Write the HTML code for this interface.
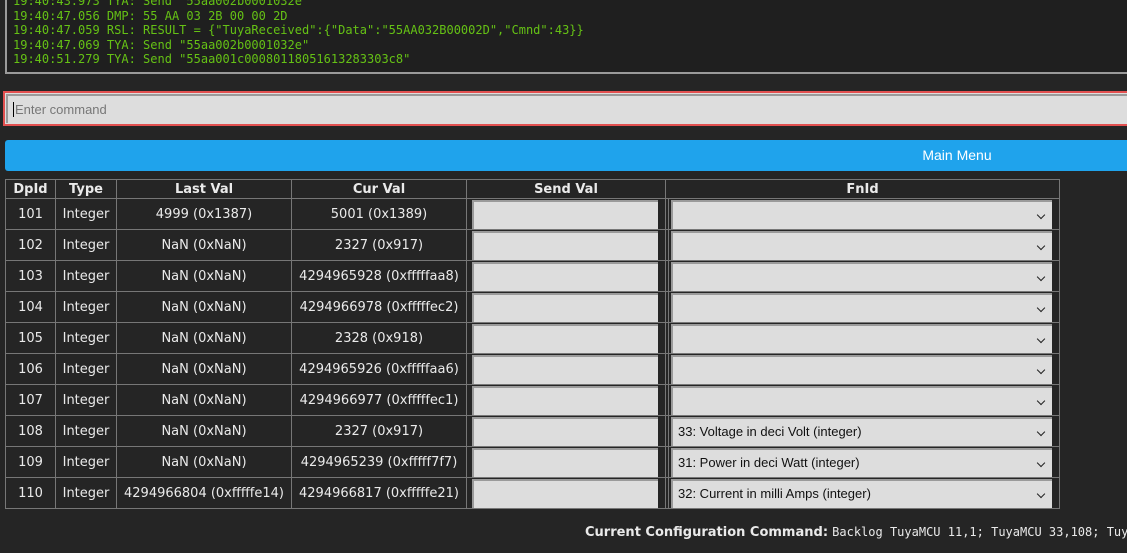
<!DOCTYPE html>
<html><head><meta charset="utf-8"><style>
*{box-sizing:border-box;margin:0;padding:0}
html,body{width:1127px;height:553px;overflow:hidden;background:#252525}
body{position:relative;font-family:"DejaVu Sans","Liberation Sans",sans-serif;color:#eaeaea}
#wrap{position:absolute;left:0;top:0;width:1127px;height:553px;overflow:hidden}
#con{position:absolute;left:5px;top:-6px;width:1130px;height:80px;background:#1f1f1f;border:2px solid #9a9a9a;border-top:none;border-right:none;font-family:"DejaVu Sans Mono",monospace;font-size:12px;color:#65c115;padding:0 0 0 6px;line-height:14.6px;white-space:pre;overflow:hidden}
#cmd{position:absolute;left:3px;top:91px;width:1130px;height:35px;border:2px solid #e25050;background:#ddd;padding:1px}
#cmd div{height:29px;border-top:2px solid #9a9a9a;border-left:2px solid #9a9a9a;font-family:"Liberation Sans",sans-serif;font-size:13px;color:#777;padding:6px 0 0 5px;}
#cmd div span{border-left:1px solid #000;padding-left:1px}
#btn{position:absolute;left:5px;top:140px;width:1904px;height:31px;background:#1fa3ec;border-radius:3px;color:#fff;text-align:center;font-size:14px;line-height:31px;font-family:"Liberation Sans",sans-serif}
table{position:absolute;left:5px;top:179px;border-collapse:collapse;table-layout:fixed;width:1054px;font-size:13px}
td,th{border:1px solid #777;text-align:center;height:31px;padding:0}
th{height:19px;font-size:13px}
td.s,td.f{position:relative}
.in{position:absolute;left:5px;top:1px;width:186px;height:29px;background:#ddd;border-top:2px solid #9a9a9a;border-left:2px solid #9a9a9a}
td.f:before{content:"";position:absolute;left:2px;top:0;bottom:0;border-left:1px solid #777}
.sel{position:absolute;left:5px;top:1px;width:381px;height:29px;background:#ddd;border-top:2px solid #9a9a9a;border-left:2px solid #9a9a9a;color:#111;text-align:left;font-family:"Liberation Sans",sans-serif;font-size:13px;padding:5px 0 0 5px}
.sel:after{content:"";position:absolute;right:8px;top:10px;width:5px;height:5px;border-right:1.3px solid #222;border-bottom:1.3px solid #222;transform:rotate(45deg)}
#foot{position:absolute;left:585px;top:525px;white-space:nowrap;font-size:13px}
#foot b{font-weight:bold}
#foot span{font-family:"DejaVu Sans Mono",monospace;font-size:12px}
</style></head><body><div id="wrap">
<div id="con">19:40:43.973 TYA: Send "55aa002b0001032e"
19:40:47.056 DMP: 55 AA 03 2B 00 00 2D
19:40:47.059 RSL: RESULT = {"TuyaReceived":{"Data":"55AA032B00002D","Cmnd":43}}
19:40:47.069 TYA: Send "55aa002b0001032e"
19:40:51.279 TYA: Send "55aa001c00080118051613283303c8"</div>
<div id="cmd"><div><span></span>Enter command</div></div>
<div id="btn">Main Menu</div>
<table>
<colgroup><col style="width:50px"><col style="width:61px"><col style="width:175px"><col style="width:175px"><col style="width:199px"><col style="width:394px"></colgroup>
<tr><th>DpId</th><th>Type</th><th>Last Val</th><th>Cur Val</th><th>Send Val</th><th>FnId</th></tr>
<tr><td>101</td><td>Integer</td><td>4999 (0x1387)</td><td>5001 (0x1389)</td><td class="s"><div class="in"></div></td><td class="f"><div class="sel"></div></td></tr>
<tr><td>102</td><td>Integer</td><td>NaN (0xNaN)</td><td>2327 (0x917)</td><td class="s"><div class="in"></div></td><td class="f"><div class="sel"></div></td></tr>
<tr><td>103</td><td>Integer</td><td>NaN (0xNaN)</td><td>4294965928 (0xfffffaa8)</td><td class="s"><div class="in"></div></td><td class="f"><div class="sel"></div></td></tr>
<tr><td>104</td><td>Integer</td><td>NaN (0xNaN)</td><td>4294966978 (0xfffffec2)</td><td class="s"><div class="in"></div></td><td class="f"><div class="sel"></div></td></tr>
<tr><td>105</td><td>Integer</td><td>NaN (0xNaN)</td><td>2328 (0x918)</td><td class="s"><div class="in"></div></td><td class="f"><div class="sel"></div></td></tr>
<tr><td>106</td><td>Integer</td><td>NaN (0xNaN)</td><td>4294965926 (0xfffffaa6)</td><td class="s"><div class="in"></div></td><td class="f"><div class="sel"></div></td></tr>
<tr><td>107</td><td>Integer</td><td>NaN (0xNaN)</td><td>4294966977 (0xfffffec1)</td><td class="s"><div class="in"></div></td><td class="f"><div class="sel"></div></td></tr>
<tr><td>108</td><td>Integer</td><td>NaN (0xNaN)</td><td>2327 (0x917)</td><td class="s"><div class="in"></div></td><td class="f"><div class="sel">33: Voltage in deci Volt (integer)</div></td></tr>
<tr><td>109</td><td>Integer</td><td>NaN (0xNaN)</td><td>4294965239 (0xfffff7f7)</td><td class="s"><div class="in"></div></td><td class="f"><div class="sel">31: Power in deci Watt (integer)</div></td></tr>
<tr><td>110</td><td>Integer</td><td>4294966804 (0xfffffe14)</td><td>4294966817 (0xfffffe21)</td><td class="s"><div class="in"></div></td><td class="f"><div class="sel">32: Current in milli Amps (integer)</div></td></tr>
</table>
<div id="foot"><b>Current Configuration Command:</b> <span>Backlog TuyaMCU 11,1; TuyaMCU 33,108; TuyaMCU 31,109; TuyaMCU 32,110</span></div>
</div></body></html>
